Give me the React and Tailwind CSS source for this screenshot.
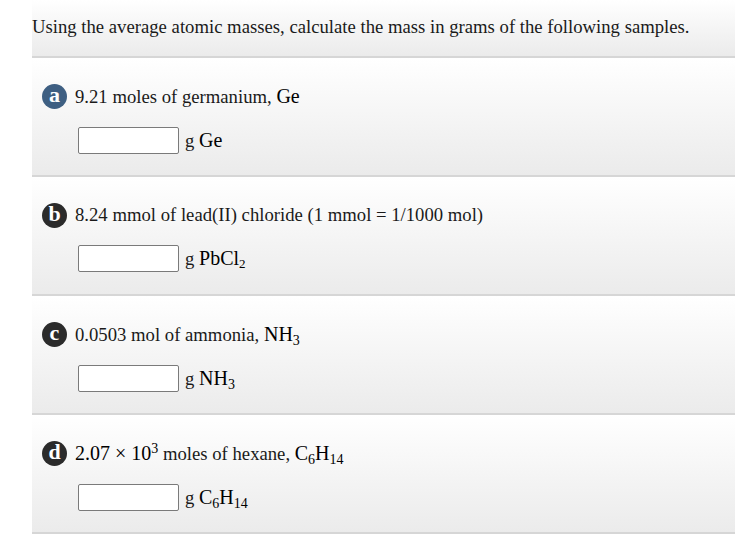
import React from 'react';

const Badge = ({ letter, blue }) => (
  <span
    className={`flex h-[25px] w-[25px] shrink-0 items-center justify-center rounded-full text-[22px] font-bold leading-none text-white ${
      blue ? 'bg-[#3e5f82]' : 'bg-[#2b2b2b]'
    }`}
  >
    <span className="-mt-[3px]">{letter}</span>
  </span>
);

const Math = ({ children }) => <span className="text-[20px] text-black">{children}</span>;

const Part = ({ letter, blue, question, unit }) => (
  <div className="flex h-[119px] flex-col border-b-2 border-[#d6d6d6] bg-linear-to-b from-white to-[#ebebeb] pl-[10px] pt-[24px]">
    <div className="flex items-center gap-[8px] text-[18.7px] leading-[28px] text-[#1a1a1a]">
      <Badge letter={letter} blue={blue} />
      <span>{question}</span>
    </div>
    <div className="mt-[14px] flex items-center gap-[6px] pl-[36px]">
      <div className="h-[27px] w-[101px] rounded-[2px] border border-[#7a7a7a] bg-white" />
      <span className="text-[18.7px] text-[#1a1a1a]">
        g <Math>{unit}</Math>
      </span>
    </div>
  </div>
);

export default function App() {
  return (
    <div className="min-h-[552px] bg-white pl-[32px] font-['Liberation_Serif','Times_New_Roman',serif]">
      <div className="flex h-[58px] items-start border-b-2 border-[#d6d6d6] bg-linear-to-b from-white to-[#ebebeb] pt-[13px] text-[18.7px] leading-[28px] text-[#1a1a1a]">
        Using the average atomic masses, calculate the mass in grams of the following samples.
      </div>
      <Part
        letter="a"
        blue
        question={
          <>
            9.21 moles of germanium, <Math>Ge</Math>
          </>
        }
        unit="Ge"
      />
      <Part
        letter="b"
        question="8.24 mmol of lead(II) chloride (1 mmol = 1/1000 mol)"
        unit={
          <>
            PbCl<sub className="text-[13px]">2</sub>
          </>
        }
      />
      <Part
        letter="c"
        question={
          <>
            0.0503 mol of ammonia, <Math>NH<sub className="text-[14px]">3</sub></Math>
          </>
        }
        unit={
          <>
            NH<sub className="text-[14px]">3</sub>
          </>
        }
      />
      <Part
        letter="d"
        question={
          <>
            <Math>
              2.07 × 10<sup className="text-[14px]">3</sup>
            </Math>{' '}
            moles of hexane,{' '}
            <Math>
              C<sub className="text-[14px]">6</sub>H<sub className="text-[14px]">14</sub>
            </Math>
          </>
        }
        unit={
          <>
            C<sub className="text-[14px]">6</sub>H<sub className="text-[14px]">14</sub>
          </>
        }
      />
    </div>
  );
}
